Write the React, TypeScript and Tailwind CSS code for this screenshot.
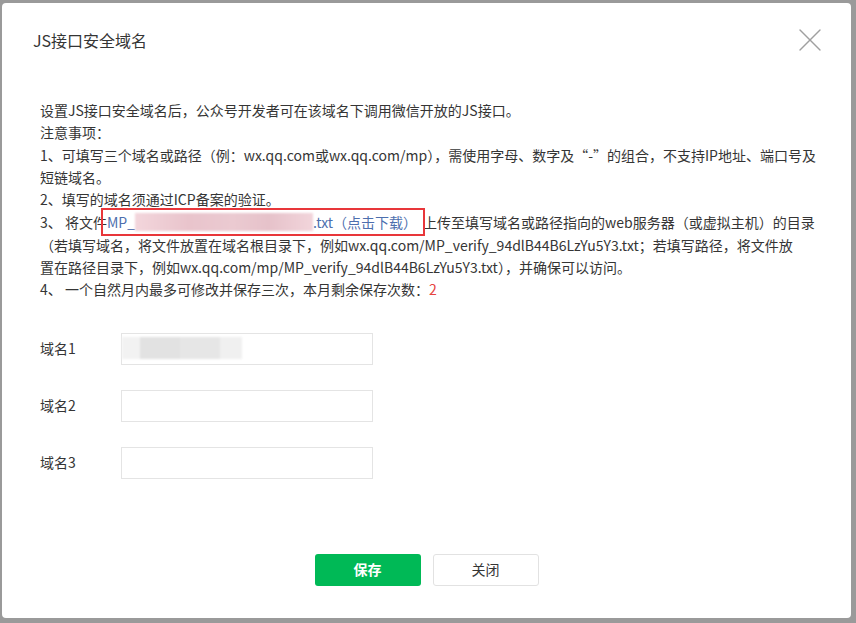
import { X } from 'lucide-react'

const font = { fontFamily: '"Noto Sans CJK SC", "Noto Sans", sans-serif' }

function DomainRow({ label, blurred }: { label: string; blurred?: boolean }) {
  return (
    <div className="flex items-center">
      <div className="w-[81px] text-[14px] text-[#353535]">{label}</div>
      <div className="relative h-[32px] w-[252px] border border-[#e4e4e4] bg-white">
        {blurred && (
          <div className="absolute left-0 top-[3px] flex h-[22px] w-[120px] blur-[1px]">
            <div className="w-[18px] bg-[#f2f2f2]" />
            <div className="w-[40px] bg-[#e2e2e2]" />
            <div className="w-[40px] bg-[#e6e6e6]" />
            <div className="w-[22px] bg-[#f0f0f0]" />
          </div>
        )}
      </div>
    </div>
  )
}

export default function App() {
  return (
    <div className="h-[623px] w-[856px] overflow-hidden bg-[#9a9a9a] pl-[2px] pt-[3px]" style={font}>
      <div className="h-[615px] w-[849px] rounded-[4px] bg-white">
        <div className="flex h-[74px] items-center justify-between pl-[31px] pr-[21px]">
          <h1 className="text-[16px] text-[#353535]">JS接口安全域名</h1>
          <X className="h-[40px] w-[40px] text-[#a0a0a0]" strokeWidth={0.8} />
        </div>

        <div className="mt-[22px] pl-[38px] text-[14px] leading-[22.3px] text-[#353535]">
          <div className="whitespace-nowrap">设置JS接口安全域名后，公众号开发者可在该域名下调用微信开放的JS接口。</div>
          <div className="whitespace-nowrap">注意事项：</div>
          <div className="whitespace-nowrap">1、可填写三个域名或路径（例：wx.qq.com或wx.qq.com/mp），需使用字母、数字及“-”的组合，不支持IP地址、端口号及</div>
          <div className="whitespace-nowrap">短链域名。</div>
          <div className="whitespace-nowrap">2、填写的域名须通过ICP备案的验证。</div>
          <div className="whitespace-nowrap">
            3、 将文件<span className="relative mr-[6px] text-[#4d6fae]">MP_<span className="inline-block h-[18px] w-[178px] translate-y-[3px] bg-[linear-gradient(90deg,#f3d6dc,#e9c4cc_30%,#ebcad1_55%,#e6c2ca_75%,#f2d5db)] blur-[1px]" />.txt（点击下载）<span className="absolute -left-[6px] -right-[8px] -top-[4px] -bottom-[4px] border-2 border-[#e8363a]" /></span>上传至填写域名或路径指向的web服务器（或虚拟主机）的目录
          </div>
          <div className="whitespace-nowrap">（若填写域名，将文件放置在域名根目录下，例如wx.qq.com/MP_verify_94dlB44B6LzYu5Y3.txt；若填写路径，将文件放</div>
          <div className="whitespace-nowrap">置在路径目录下，例如wx.qq.com/mp/MP_verify_94dlB44B6LzYu5Y3.txt），并确保可以访问。</div>
          <div className="whitespace-nowrap">
            4、 一个自然月内最多可修改并保存三次，本月剩余保存次数：<span className="text-[#e64340]">2</span>
          </div>
        </div>

        <div className="mt-[32px] flex flex-col gap-[25px] pl-[38px]">
          <DomainRow label="域名1" blurred />
          <DomainRow label="域名2" />
          <DomainRow label="域名3" />
        </div>

        <div className="mt-[75px] flex justify-center gap-[12px]">
          <button className="h-[32px] w-[106px] rounded-[3px] bg-[#00b956] text-[14px] font-bold text-white">保存</button>
          <button className="h-[32px] w-[106px] rounded-[3px] border border-[#e2e2e2] bg-white text-[14px] text-[#353535]">关闭</button>
        </div>
      </div>
    </div>
  )
}
